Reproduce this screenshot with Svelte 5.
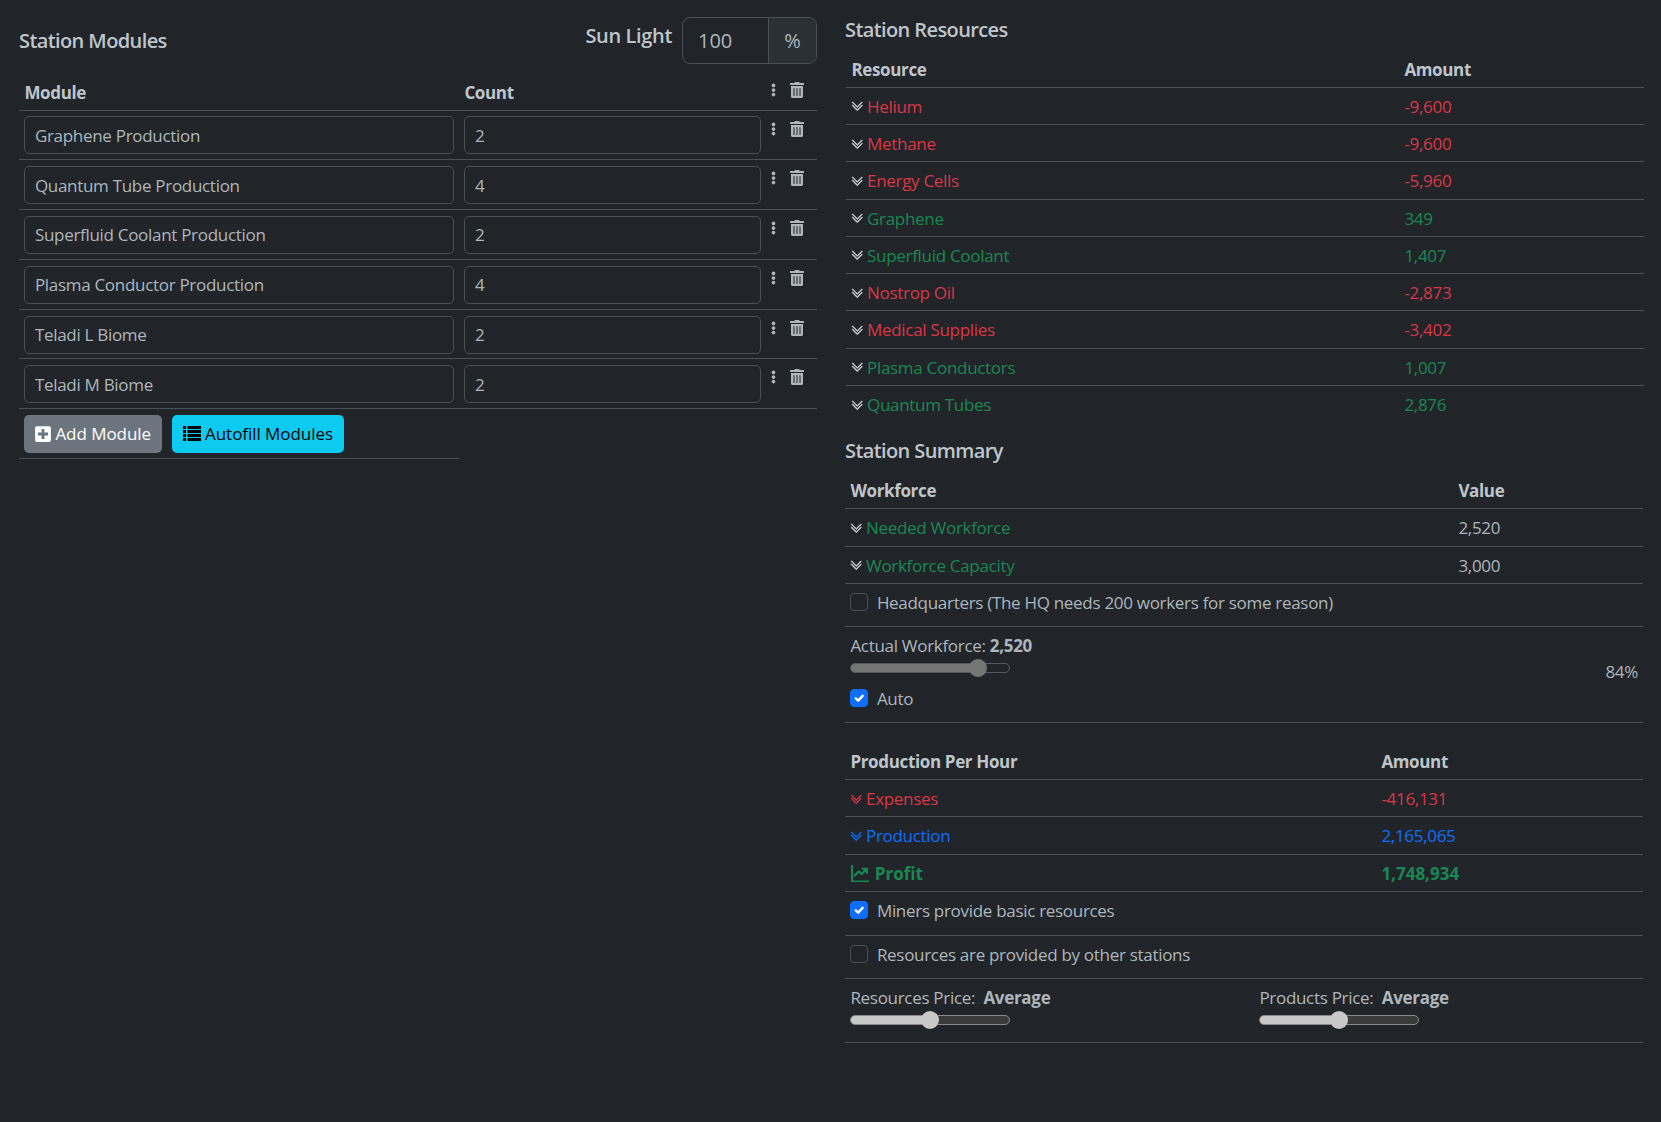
<script lang="ts">
  const modules = [
    { name: 'Graphene Production', count: 2 },
    { name: 'Quantum Tube Production', count: 4 },
    { name: 'Superfluid Coolant Production', count: 2 },
    { name: 'Plasma Conductor Production', count: 4 },
    { name: 'Teladi L Biome', count: 2 },
    { name: 'Teladi M Biome', count: 2 }
  ];

  const resources = [
    { name: 'Helium', amount: '-9,600', tone: 'red' },
    { name: 'Methane', amount: '-9,600', tone: 'red' },
    { name: 'Energy Cells', amount: '-5,960', tone: 'red' },
    { name: 'Graphene', amount: '349', tone: 'green' },
    { name: 'Superfluid Coolant', amount: '1,407', tone: 'green' },
    { name: 'Nostrop Oil', amount: '-2,873', tone: 'red' },
    { name: 'Medical Supplies', amount: '-3,402', tone: 'red' },
    { name: 'Plasma Conductors', amount: '1,007', tone: 'green' },
    { name: 'Quantum Tubes', amount: '2,876', tone: 'green' }
  ];

  const dots = 'M96 184c39.8 0 72 32.2 72 72s-32.2 72-72 72-72-32.2-72-72 32.2-72 72-72zM24 80c0 39.8 32.2 72 72 72s72-32.2 72-72S135.8 8 96 8 24 40.2 24 80zm0 352c0 39.8 32.2 72 72 72s72-32.2 72-72-32.2-72-72-72-72 32.2-72 72z';
  const trash = 'M32 464a48 48 0 0 0 48 48h288a48 48 0 0 0 48-48V128H32zm272-256a16 16 0 0 1 32 0v224a16 16 0 0 1-32 0zm-96 0a16 16 0 0 1 32 0v224a16 16 0 0 1-32 0zm-96 0a16 16 0 0 1 32 0v224a16 16 0 0 1-32 0zM432 32H312l-9.4-18.7A24 24 0 0 0 281.1 0H166.8a23.72 23.72 0 0 0-21.4 13.3L136 32H16A16 16 0 0 0 0 48v32a16 16 0 0 0 16 16h416a16 16 0 0 0 16-16V48a16 16 0 0 0-16-16z';

  // where the filled part of the track stops, thumb is 18px on a 160px track
  const stop = (value: number) => `--stop: ${9 + (value / 100) * 142}px`;
</script>

{#snippet chev(tone = '')}
  <svg class="chev {tone}" viewBox="0 0 16 16">
    <path d="M1.646 6.646a.5.5 0 0 1 .708 0L8 12.293l5.646-5.647a.5.5 0 0 1 .708.708l-6 6a.5.5 0 0 1-.708 0l-6-6a.5.5 0 0 1 0-.708z" />
    <path d="M1.646 2.646a.5.5 0 0 1 .708 0L8 8.293l5.646-5.647a.5.5 0 0 1 .708.708l-6 6a.5.5 0 0 1-.708 0l-6-6a.5.5 0 0 1 0-.708z" />
  </svg>
{/snippet}

{#snippet actions()}
  <div class="actions">
    <svg class="dots" viewBox="0 0 192 512"><path d={dots} /></svg>
    <svg class="trash" viewBox="0 0 448 512"><path d={trash} /></svg>
  </div>
{/snippet}

{#snippet check(on = false, label = '')}
  <label class="check">
    <span class="box" class:on>
      {#if on}
        <svg viewBox="0 0 20 20"><path d="M6 10.5l3 2.8 5.5-6" /></svg>
      {/if}
    </span>
    {label}
  </label>
{/snippet}

<main class="page">
  <section class="left">
    <div class="top">
      <h2>Station Modules</h2>
      <div class="sun">
        <span class="sun-label">Sun Light</span>
        <div class="group">
          <input class="sun-input" value="100" />
          <span class="addon">%</span>
        </div>
      </div>
    </div>

    <table class="modules">
      <colgroup><col class="c-name" /><col class="c-count" /><col /></colgroup>
      <thead>
        <tr>
          <th>Module</th>
          <th>Count</th>
          <th>{@render actions()}</th>
        </tr>
      </thead>
      <tbody>
        {#each modules as m}
          <tr>
            <td><input class="field" value={m.name} /></td>
            <td><input class="field" value={m.count} /></td>
            <td>{@render actions()}</td>
          </tr>
        {/each}
        <tr class="foot">
          <td>
            <div class="buttons">
              <button class="btn grey">
                <svg viewBox="0 0 448 512"><path d="M400 32H48C21.5 32 0 53.5 0 80v352c0 26.5 21.5 48 48 48h352c26.5 0 48-21.5 48-48V80c0-26.5-21.5-48-48-48zm-32 252c0 6.6-5.4 12-12 12h-92v92c0 6.6-5.4 12-12 12h-56c-6.6 0-12-5.4-12-12v-92H92c-6.6 0-12-5.4-12-12v-56c0-6.6 5.4-12 12-12h92v-92c0-6.6 5.4-12 12-12h56c6.6 0 12 5.4 12 12v92h92c6.6 0 12 5.4 12 12v56z" /></svg>
                Add Module
              </button>
              <button class="btn cyan">
                <svg class="list" viewBox="0 0 18 15">
                  <rect y="0" width="3" height="3" /><rect x="4.5" y="0" width="13.5" height="3" />
                  <rect y="4" width="3" height="3" /><rect x="4.5" y="4" width="13.5" height="3" />
                  <rect y="8" width="3" height="3" /><rect x="4.5" y="8" width="13.5" height="3" />
                  <rect y="12" width="3" height="3" /><rect x="4.5" y="12" width="13.5" height="3" />
                </svg>
                Autofill Modules
              </button>
            </div>
          </td>
          <td class="blank"></td>
          <td class="blank"></td>
        </tr>
      </tbody>
    </table>
  </section>

  <section class="right">
    <h2 class="res-title">Station Resources</h2>
    <table class="data res">
      <colgroup><col class="c-res" /><col /></colgroup>
      <thead>
        <tr><th>Resource</th><th>Amount</th></tr>
      </thead>
      <tbody>
        {#each resources as r, i}
          <tr class:last={i === resources.length - 1}>
            <td class={r.tone}>{@render chev()} {r.name}</td>
            <td class={r.tone}>{r.amount}</td>
          </tr>
        {/each}
      </tbody>
    </table>

    <h2 class="sum-title">Station Summary</h2>
    <table class="data work">
      <colgroup><col class="c-work" /><col /></colgroup>
      <thead>
        <tr><th>Workforce</th><th>Value</th></tr>
      </thead>
      <tbody>
        <tr>
          <td class="green">{@render chev()} Needed Workforce</td>
          <td>2,520</td>
        </tr>
        <tr>
          <td class="green">{@render chev()} Workforce Capacity</td>
          <td>3,000</td>
        </tr>
        <tr class="opt">
          <td colspan="2">{@render check(false, 'Headquarters (The HQ needs 200 workers for some reason)')}</td>
        </tr>
        <tr class="actual">
          <td colspan="2">
            <div class="actual-row">
              <div>
                <div class="slider-label">Actual Workforce: <b>2,520</b></div>
                <input class="range" type="range" min="0" max="100" value="84" disabled style={stop(84)} />
                {@render check(true, 'Auto')}
              </div>
              <span class="pct">84%</span>
            </div>
          </td>
        </tr>
      </tbody>
    </table>

    <table class="data prod">
      <colgroup><col class="c-prod" /><col /></colgroup>
      <thead>
        <tr><th>Production Per Hour</th><th>Amount</th></tr>
      </thead>
      <tbody>
        <tr>
          <td class="red">{@render chev('tinted')} Expenses</td>
          <td class="red">-416,131</td>
        </tr>
        <tr>
          <td class="blue">{@render chev('tinted')} Production</td>
          <td class="blue">2,165,065</td>
        </tr>
        <tr>
          <td class="green strong">
            <svg class="chart" viewBox="0 0 16 16"><path d="M0 0h1v15h15v1H0V0Zm10 3.5a.5.5 0 0 1 .5-.5h4a.5.5 0 0 1 .5.5v4a.5.5 0 0 1-1 0V4.707l-4.146 4.147a.5.5 0 0 1-.708 0L7 6.707l-3.646 3.647a.5.5 0 0 1-.708-.708l4-4a.5.5 0 0 1 .708 0L9.5 7.793 13.293 4H10.5a.5.5 0 0 1-.5-.5Z" /></svg>
            Profit
          </td>
          <td class="green strong">1,748,934</td>
        </tr>
        <tr class="opt first">
          <td colspan="2">{@render check(true, 'Miners provide basic resources')}</td>
        </tr>
        <tr class="opt">
          <td colspan="2">{@render check(false, 'Resources are provided by other stations')}</td>
        </tr>
        <tr class="prices">
          <td colspan="2">
            <div class="price-row">
              <div>
                <div class="slider-label">Resources Price: &nbsp;<b>Average</b></div>
                <input class="range" type="range" min="0" max="100" value="50" style={stop(50)} />
              </div>
              <div>
                <div class="slider-label">Products Price: &nbsp;<b>Average</b></div>
                <input class="range" type="range" min="0" max="100" value="50" style={stop(50)} />
              </div>
            </div>
          </td>
        </tr>
      </tbody>
    </table>
  </section>
</main>

<style>
  :global(body) {
    background: #212529;
    color: #adb5bd;
    font-family: "Open Sans", "Noto Sans", sans-serif;
    font-size: 17px;
    color-scheme: dark;
  }

  .page {
    display: grid;
    grid-template-columns: 798px 798px;
    column-gap: 28px;
    padding: 0 17px 0 19px;
    min-height: 1122px;
    box-sizing: border-box;
  }

  h2 {
    margin: 0;
    font-size: 20px;
    font-weight: 600;
    line-height: 26px;
    color: #bfc5cb;
    letter-spacing: -0.6px;
  }

  .top {
    display: flex;
    justify-content: space-between;
    align-items: center;
    padding-top: 17px;
    height: 47px;
    margin-bottom: 9px;
    box-sizing: content-box;
  }

  .top h2 {
    margin-top: 1px;
  }

  .sun {
    display: flex;
    align-items: flex-start;
    height: 47px;
  }

  .sun-label {
    font-size: 20px;
    font-weight: 600;
    line-height: 26px;
    color: #bfc5cb;
    letter-spacing: -0.35px;
    margin: 6px 10px 0 0;
  }

  .group {
    display: flex;
    width: 135px;
    height: 47px;
    border: 1px solid #495057;
    border-radius: 8px;
    box-sizing: border-box;
    overflow: hidden;
  }

  .sun-input {
    width: 85px;
    border: 0;
    background: transparent;
    color: #adb5bd;
    font: inherit;
    font-size: 20px;
    padding: 0 0 0 15px;
    box-sizing: border-box;
    outline: none;
  }

  .addon {
    flex: 1;
    display: flex;
    align-items: center;
    justify-content: center;
    background: #2b3035;
    border-left: 1px solid #495057;
    font-size: 20px;
  }

  table {
    width: 798px;
    table-layout: fixed;
    border-collapse: separate;
    border-spacing: 0;
  }

  th {
    text-align: left;
    font-weight: 700;
    color: #bfc5cb;
    letter-spacing: -0.35px;
    padding: 2px 0 0 5.4px;
    height: 37.5px;
    box-sizing: border-box;
    border-bottom: 1px solid #495057;
    vertical-align: middle;
  }

  td {
    padding: 1px 0 0 5.4px;
    box-sizing: border-box;
    border-bottom: 1px solid #495057;
    vertical-align: middle;
    letter-spacing: -0.3px;
  }

  .c-name {
    width: 440px;
  }

  .c-count {
    width: 302px;
  }

  .modules td {
    height: 49.8px;
    padding-top: 1px;
  }

  .modules td:last-child,
  .modules th:last-child {
    padding: 0;
    vertical-align: top;
  }

  .modules th:last-child {
    vertical-align: middle;
  }

  .field {
    width: calc(100% - 5.5px);
    height: 38px;
    display: block;
    box-sizing: border-box;
    background: transparent;
    border: 1px solid #495057;
    border-radius: 5px;
    color: #adb5bd;
    font: inherit;
    letter-spacing: -0.3px;
    padding: 0 9.5px;
    outline: none;
  }

  .modules td:nth-child(2) .field {
    width: 297px;
  }

  .actions {
    display: flex;
    align-items: flex-start;
    padding: 11px 0 0 10px;
    fill: #adb5bd;
  }

  th .actions {
    padding-top: 0;
    margin-top: -2px;
  }

  .dots {
    width: 5px;
    height: 14px;
  }

  .trash {
    width: 14px;
    height: 16px;
    margin-left: 14px;
    margin-top: -1px;
  }

  .modules .foot td {
    height: 49.5px;
    padding-top: 0;
  }

  .foot .blank {
    border-bottom: 0;
  }

  .buttons {
    display: flex;
    gap: 10px;
  }

  .btn {
    display: flex;
    align-items: center;
    gap: 4px;
    height: 38px;
    padding: 0 11px;
    border: 0;
    border-radius: 5px;
    font: inherit;
    letter-spacing: -0.05px;
    white-space: nowrap;
  }

  .btn svg {
    width: 16px;
    height: 18px;
    fill: currentColor;
  }

  .btn svg.list {
    width: 18px;
    height: 15px;
  }

  .grey {
    background: #6c757d;
    color: #fff;
  }

  .cyan {
    background: #0dcaf0;
    color: #000;
  }

  .res-title {
    padding-top: 17px;
    height: 33.5px;
    box-sizing: content-box;
  }

  .data tbody td {
    height: 37.25px;
  }

  .data th {
    height: 37.25px;
  }

  .work th {
    padding-top: 1px;
  }

  .res {
    margin-left: 1px;
  }

  .c-res {
    width: 553px;
  }

  .c-work {
    width: 608px;
  }

  .c-prod {
    width: 531px;
  }

  .res .last td {
    border-bottom: 0;
  }

  .sum-title {
    margin-top: 15px;
    height: 34px;
  }

  .chev {
    width: 12.5px;
    height: 12.5px;
    fill: #ced4da;
    stroke: #ced4da;
    stroke-width: 0.9;
    vertical-align: 0;
    margin-right: -1px;
  }

  .chev.tinted {
    fill: currentColor;
    stroke: currentColor;
  }

  .chart {
    width: 20px;
    height: 17px;
    fill: currentColor;
    stroke: currentColor;
    stroke-width: 1;
    vertical-align: -2px;
  }

  .red {
    color: #dc3545;
  }

  .green {
    color: #198754;
  }

  .blue {
    color: #0d6efd;
  }

  .strong {
    font-weight: 700;
    letter-spacing: 0;
  }

  .data .opt td {
    height: 43px;
    padding: 0 0 4px 5.4px;
  }

  .data .opt.first td {
    height: 44px;
    padding-bottom: 6px;
  }

  .check {
    display: flex;
    align-items: center;
    gap: 8.5px;
  }

  .box {
    width: 18px;
    height: 18px;
    box-sizing: border-box;
    border: 1px solid #495057;
    border-radius: 4px;
    flex: none;
    margin-top: -1px;
  }

  .box.on {
    background: #0d6efd;
    border-color: #0d6efd;
  }

  .box svg {
    display: block;
    width: 100%;
    height: 100%;
    fill: none;
    stroke: #fff;
    stroke-width: 3;
    stroke-linecap: round;
    stroke-linejoin: round;
  }

  .data .actual td {
    height: 96px;
    vertical-align: top;
    padding-top: 7.5px;
  }

  .actual-row {
    display: flex;
    justify-content: space-between;
    align-items: center;
    padding-right: 5px;
  }

  .slider-label b {
    font-weight: 700;
  }

  .range {
    appearance: none;
    -webkit-appearance: none;
    display: block;
    width: 160px;
    height: 18px;
    margin: 1.5px 0 0;
    background: transparent;
    --fill: #c8c8c8;
    --rest: #3b3b3b;
    --edge: #8a8a8a;
  }

  .range:disabled {
    --fill: #757575;
    --rest: transparent;
    --edge: #555b60;
  }

  .range::-webkit-slider-runnable-track {
    height: 10px;
    box-sizing: border-box;
    border: 1px solid var(--edge);
    border-radius: 5px;
    background: linear-gradient(to right, var(--fill) var(--stop), var(--rest) var(--stop));
  }

  .range::-webkit-slider-thumb {
    -webkit-appearance: none;
    width: 18px;
    height: 18px;
    margin-top: -5px;
    border-radius: 50%;
    background: var(--fill);
  }

  .actual .check {
    margin-top: 10px;
  }

  .pct {
    margin-top: -2px;
  }

  .prod {
    margin-top: 20px;
  }

  .data .prices td {
    height: 64px;
    vertical-align: top;
    padding-top: 7.5px;
  }

  .price-row {
    display: grid;
    grid-template-columns: 409px 1fr;
  }
</style>
